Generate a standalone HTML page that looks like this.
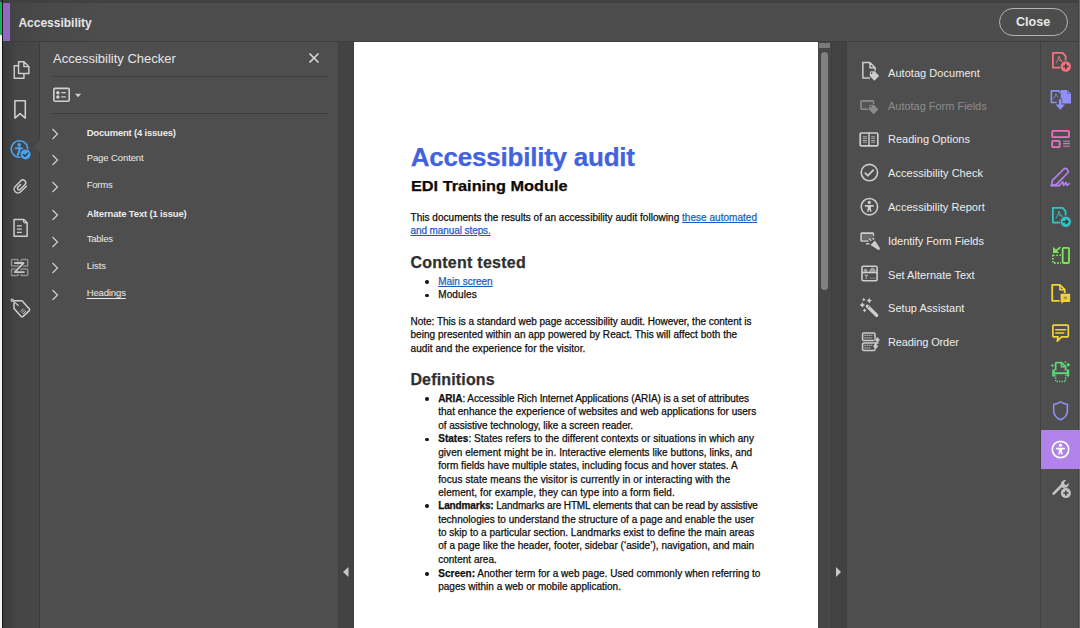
<!DOCTYPE html>
<html><head><meta charset="utf-8">
<style>
*{margin:0;padding:0;box-sizing:border-box}
html,body{width:1080px;height:628px;overflow:hidden;background:#4d4d4d;font-family:"Liberation Sans",sans-serif}
.a{position:absolute}
.t{position:absolute;white-space:nowrap;line-height:1}
/* header */
#topstrip{left:0;top:0;width:1080px;height:3px;background:#414141}
#hdr{left:3px;top:3px;width:1076px;height:38px;background:linear-gradient(90deg,#434343 0px,#494949 40px,#4d4d4d 110px)}
#hdrline{left:3px;top:41px;width:1076px;height:1px;background:#3e3e3e}
#edgeG{left:0;top:2px;width:2px;height:33px;background:#1faa6a}
#edgeW{left:0;top:35px;width:2px;height:593px;background:#f4f4f4}
#edgeB{left:2px;top:0;width:1px;height:628px;background:#151515}
#purple{left:3px;top:3px;width:7px;height:38px;background:#9169c2}
#rightedge{left:1078px;top:0;width:2px;height:628px;background:linear-gradient(90deg,#404040 50%,#6a6a6a 50%)}
/* left icon bar */
#lbar{left:3px;top:42px;width:36px;height:586px;background:linear-gradient(90deg,#3b3b3b 0%,#454545 40%,#474747 100%)}
#lbarline{left:39px;top:42px;width:1px;height:586px;background:#3c3c3c}
/* panel */
#panel{left:40px;top:42px;width:298px;height:586px;background:#4e4e4e}
#gutL{left:338px;top:42px;width:16px;height:586px;background:#434343;border-left:1px solid #3f3f3f;border-right:1px solid #3f3f3f}
#gutLline{left:338px;top:42px;width:1px;height:586px;background:#464646}
/* page */
#page{left:354px;top:42px;width:464px;height:586px;background:#fff}
#sbar{left:818px;top:42px;width:13px;height:586px;background:#464646}
#sbtop{left:819px;top:43px;width:11px;height:5px;background:#7a7a7a}
#thumb{left:821px;top:52px;width:7px;height:238px;background:#808080;border-radius:4px}
#gutR{left:831px;top:42px;width:16px;height:586px;background:#424242;border-left:1px solid #3e3e3e;border-right:1px solid #3f3f3f}
/* right panel */
#rpanel{left:847px;top:42px;width:193px;height:586px;background:#4e4e4e}
#rline{left:1040px;top:42px;width:1px;height:586px;background:#404040}
#rbar{left:1041px;top:42px;width:37px;height:586px;background:#4e4e4e}
.d{position:absolute;white-space:nowrap;line-height:1;font-size:10px;color:#0e0e0e;transform-origin:0 0;-webkit-text-stroke-width:0.25px}
.p{position:absolute;white-space:nowrap;line-height:1;color:#ebebeb;transform-origin:0 0}
.t{transform-origin:0 0}

.lk{color:#1d5ec4;text-decoration:underline;text-underline-offset:1px}
.bul{width:3.8px;height:3.8px;border-radius:50%;background:#111}
</style></head><body>
<div class="a" id="topstrip"></div>
<div class="a" id="hdr"></div>
<div class="a" id="hdrline"></div>
<div class="a" id="edgeG"></div>
<div class="a" id="edgeW"></div>
<div class="a" id="edgeB"></div>
<div class="a" id="purple"></div>
<div class="t" style="left:18.4px;top:16.5px;font-size:12px;font-weight:bold;color:#e6e6e6">Accessibility</div>
<div class="a" style="left:999px;top:8px;width:69px;height:28px;border:1.8px solid #b3b3b3;border-radius:14px"></div>
<div class="t" style="left:1016px;top:16.2px;font-size:12.6px;font-weight:bold;color:#e6e6e6">Close</div>

<div class="a" id="lbar"></div>
<div class="a" id="lbarline"></div>
<div class="a" id="panel"></div>
<div class="a" id="gutL"></div>
<div class="a" id="page"></div>
<div class="a" id="sbar"></div>
<div class="a" id="sbtop"></div>
<div class="a" id="thumb"></div>
<div class="a" id="gutR"></div>
<div class="a" id="rpanel"></div>
<div class="a" id="rline"></div>
<div class="a" id="rbar"></div>
<div class="a" id="rightedge"></div>

<div class="t" style="left:53px;top:52.3px;font-size:13px;color:#e6e6e6">Accessibility Checker</div>
<svg class="a" style="left:307px;top:51.1px" width="14" height="14" viewBox="0 0 14 14"><path d="M2.5 2.5L11.5 11.5M11.5 2.5L2.5 11.5" stroke="#d6d6d6" stroke-width="1.7"/></svg>
<div class="a" style="left:53px;top:76px;width:275px;height:1px;background:#3c3c3c"></div>
<svg class="a" style="left:52px;top:86px" width="32" height="17" viewBox="0 0 32 17"><rect x="1.85" y="2.4" width="15.35" height="12.8" rx="1.2" fill="none" stroke="#d0d0d0" stroke-width="1.6"/><circle cx="5.85" cy="6.65" r="1.75" fill="#cfcfcf"/><circle cx="5.85" cy="10.95" r="1.75" fill="#cfcfcf"/><path d="M9.2 6.65H13.8M9.2 10.95H13.8" stroke="#cfcfcf" stroke-width="1.3"/><path d="M23 7.8H29.2L26.1 11.2Z" fill="#cfcfcf"/></svg>
<div class="a" style="left:53px;top:113px;width:275px;height:1px;background:#3c3c3c"></div>
<svg class="a" style="left:341px;top:565px" width="10" height="14" viewBox="0 0 10 14"><path d="M7.5 2V12L2 7Z" fill="#c8c8c8"/></svg>
<svg class="a" style="left:833px;top:565px" width="10" height="14" viewBox="0 0 10 14"><path d="M3 2V12L8 7Z" fill="#c8c8c8"/></svg>

<div class="p" style="left:86.7px;top:128.06px;font-size:9.5px;letter-spacing:-0.201px;font-weight:bold">Document (4 issues)</div>
<div class="p" style="left:86.7px;top:153.16px;font-size:9.5px;letter-spacing:-0.101px">Page Content</div>
<div class="p" style="left:86.7px;top:179.76px;font-size:9.5px;letter-spacing:-0.230px">Forms</div>
<div class="p" style="left:86.7px;top:209.16px;font-size:9.5px;letter-spacing:-0.166px;font-weight:bold">Alternate Text (1 issue)</div>
<div class="p" style="left:86.7px;top:233.96px;font-size:9.5px;letter-spacing:-0.234px">Tables</div>
<div class="p" style="left:86.7px;top:260.86px;font-size:9.5px;letter-spacing:-0.062px">Lists</div>
<div class="p" style="left:86.7px;top:288.06px;font-size:9.5px;letter-spacing:-0.134px;text-decoration:underline;text-underline-offset:1.5px">Headings</div>
<svg class="a" style="left:51px;top:127.7px" width="8" height="12" viewBox="0 0 8 12"><path d="M1.5 1 L6.5 6 L1.5 11" fill="none" stroke="#cfcfcf" stroke-width="1.2"/></svg>
<svg class="a" style="left:51px;top:154.0px" width="8" height="12" viewBox="0 0 8 12"><path d="M1.5 1 L6.5 6 L1.5 11" fill="none" stroke="#cfcfcf" stroke-width="1.2"/></svg>
<svg class="a" style="left:51px;top:181.0px" width="8" height="12" viewBox="0 0 8 12"><path d="M1.5 1 L6.5 6 L1.5 11" fill="none" stroke="#cfcfcf" stroke-width="1.2"/></svg>
<svg class="a" style="left:51px;top:208.8px" width="8" height="12" viewBox="0 0 8 12"><path d="M1.5 1 L6.5 6 L1.5 11" fill="none" stroke="#cfcfcf" stroke-width="1.2"/></svg>
<svg class="a" style="left:51px;top:235.5px" width="8" height="12" viewBox="0 0 8 12"><path d="M1.5 1 L6.5 6 L1.5 11" fill="none" stroke="#cfcfcf" stroke-width="1.2"/></svg>
<svg class="a" style="left:51px;top:262.0px" width="8" height="12" viewBox="0 0 8 12"><path d="M1.5 1 L6.5 6 L1.5 11" fill="none" stroke="#cfcfcf" stroke-width="1.2"/></svg>
<svg class="a" style="left:51px;top:289.0px" width="8" height="12" viewBox="0 0 8 12"><path d="M1.5 1 L6.5 6 L1.5 11" fill="none" stroke="#cfcfcf" stroke-width="1.2"/></svg>
<div class="d" style="left:410.5px;top:212.84px;letter-spacing:0.031px">This documents the results of an accessibility audit following <span class="lk">these automated</span></div>
<div class="d" style="left:410.5px;top:226.44px;letter-spacing:-0.089px"><span class="lk">and manual steps.</span></div>
<div class="d" style="left:438.2px;top:277.04px;letter-spacing:0.003px"><span class="lk">Main screen</span></div>
<div class="d" style="left:438.2px;top:290.14px;letter-spacing:0.131px">Modules</div>
<div class="d" style="left:410.5px;top:317.24px;letter-spacing:-0.009px">Note: This is a standard web page accessibility audit. However, the content is</div>
<div class="d" style="left:410.5px;top:330.44px;letter-spacing:0.041px">being presented within an app powered by React. This will affect both the</div>
<div class="d" style="left:410.5px;top:343.54px;letter-spacing:0.078px">audit and the experience for the visitor.</div>
<div class="d" style="left:438.2px;top:393.94px;letter-spacing:-0.061px"><b>ARIA</b>: Accessible Rich Internet Applications (ARIA) is a set of attributes</div>
<div class="d" style="left:438.2px;top:407.44px;letter-spacing:0.016px">that enhance the experience of websites and web applications for users</div>
<div class="d" style="left:438.2px;top:420.64px;letter-spacing:-0.015px">of assistive technology, like a screen reader.</div>
<div class="d" style="left:438.2px;top:434.44px;letter-spacing:0.033px"><b>States</b>: States refers to the different contexts or situations in which any</div>
<div class="d" style="left:438.2px;top:447.74px;letter-spacing:0.053px">given element might be in. Interactive elements like buttons, links, and</div>
<div class="d" style="left:438.2px;top:461.24px;letter-spacing:0.030px">form fields have multiple states, including focus and hover states. A</div>
<div class="d" style="left:438.2px;top:474.54px;letter-spacing:0.085px">focus state means the visitor is currently in or interacting with the</div>
<div class="d" style="left:438.2px;top:487.74px;letter-spacing:0.080px">element, for example, they can type into a form field.</div>
<div class="d" style="left:438.2px;top:501.04px;letter-spacing:-0.134px"><b>Landmarks:</b> Landmarks are HTML elements that can be read by assistive</div>
<div class="d" style="left:438.2px;top:514.63px;letter-spacing:0.027px">technologies to understand the structure of a page and enable the user</div>
<div class="d" style="left:438.2px;top:527.93px;letter-spacing:0.012px">to skip to a particular section. Landmarks exist to define the main areas</div>
<div class="d" style="left:438.2px;top:541.13px;letter-spacing:0.026px">of a page like the header, footer, sidebar (&#8216;aside&#8217;), navigation, and main</div>
<div class="d" style="left:438.2px;top:554.53px;letter-spacing:0.019px">content area.</div>
<div class="d" style="left:438.2px;top:568.63px;letter-spacing:0.022px"><b>Screen:</b> Another term for a web page. Used commonly when referring to</div>
<div class="d" style="left:438.2px;top:581.93px;letter-spacing:0.011px">pages within a web or mobile application.</div>
<div class="d" style="left:410.8px;top:143.89px;font-size:26px;font-weight:bold;color:#4262de;letter-spacing:-0.228px">Accessibility audit</div>
<div class="d" style="left:410.5px;top:179.31px;font-size:14.4px;font-weight:bold;color:#0b0b0b;transform:scaleX(1.1314)">EDI Training Module</div>
<div class="d" style="left:410.4px;top:255.26px;font-size:16px;font-weight:bold;color:#2f2f2f;letter-spacing:0.262px">Content tested</div>
<div class="d" style="left:410.4px;top:372.36px;font-size:16px;font-weight:bold;color:#2f2f2f;letter-spacing:0.163px">Definitions</div>
<div class="a bul" style="left:424.9px;top:279.9px"></div>
<div class="a bul" style="left:424.9px;top:293.5px"></div>
<div class="a bul" style="left:424.9px;top:397.0px"></div>
<div class="a bul" style="left:424.9px;top:437.5px"></div>
<div class="a bul" style="left:424.9px;top:504.3px"></div>
<div class="a bul" style="left:424.9px;top:571.9px"></div>
<div class="t" style="left:888px;top:67.79px;font-size:11px;color:#ededed;letter-spacing:0.045px">Autotag Document</div>
<div class="t" style="left:888px;top:101.09px;font-size:11px;color:#8c8c8c;letter-spacing:-0.019px">Autotag Form Fields</div>
<div class="t" style="left:888px;top:134.49px;font-size:11px;color:#ededed;letter-spacing:0.003px">Reading Options</div>
<div class="t" style="left:888px;top:168.29px;font-size:11px;color:#ededed;letter-spacing:0.048px">Accessibility Check</div>
<div class="t" style="left:888px;top:202.19px;font-size:11px;color:#ededed;letter-spacing:0.038px">Accessibility Report</div>
<div class="t" style="left:888px;top:235.59px;font-size:11px;color:#ededed;letter-spacing:-0.037px">Identify Form Fields</div>
<div class="t" style="left:888px;top:269.59px;font-size:11px;color:#ededed;letter-spacing:0.039px">Set Alternate Text</div>
<div class="t" style="left:888px;top:302.99px;font-size:11px;color:#ededed;letter-spacing:0.041px">Setup Assistant</div>
<div class="t" style="left:888px;top:336.69px;font-size:11px;color:#ededed;letter-spacing:-0.113px">Reading Order</div>
<svg class="a" style="left:856px;top:56px" width="30" height="30" viewBox="856 56 30 30"><path d="M870 62.6 H862.85 V78 H870 M870 62.6 L875.1 67.7 V72 M870 62.6 V67.7 H875.1" fill="none" stroke="#cdcdcd" stroke-width="1.5" stroke-linejoin="round"/><g transform="translate(870.0 71.5) rotate(45)"><path d="M0 0 L3 -3.4 H8.799999999999999 Q9.6 -3.4 9.6 -2.5999999999999996 V2.5999999999999996 Q9.6 3.4 8.799999999999999 3.4 H3 Z" fill="#cdcdcd" stroke="#4e4e4e" stroke-width="1.4" stroke-linejoin="round" paint-order="stroke"/><circle cx="2.25" cy="0" r="0.85" fill="#4e4e4e"/></g></svg>
<svg class="a" style="left:856px;top:91px" width="30" height="30" viewBox="856 91 30 30"><path d="M869 109.3 H861.8 Q861 109.3 861 108.5 V101.7 Q861 100.9 861.8 100.9 H872.8 Q873.6 100.9 873.6 101.7 V104" fill="#555555" stroke="#8a8a8a" stroke-width="1.6"/><g transform="translate(869.3 105.1) rotate(45)"><path d="M0 0 L3 -3.4 H8.799999999999999 Q9.6 -3.4 9.6 -2.5999999999999996 V2.5999999999999996 Q9.6 3.4 8.799999999999999 3.4 H3 Z" fill="#8a8a8a" stroke="#4e4e4e" stroke-width="1.4" stroke-linejoin="round" paint-order="stroke"/><circle cx="2.25" cy="0" r="0.85" fill="#4e4e4e"/></g></svg>
<svg class="a" style="left:854px;top:124px" width="30" height="30" viewBox="854 124 30 30"><rect x="860.2" y="133" width="17.6" height="12.8" rx="1" fill="none" stroke="#cdcdcd" stroke-width="1.7"/><path d="M869 133 V145.8" stroke="#cdcdcd" stroke-width="1.5"/><path d="M862.8 136.7H866.9M862.8 138.4H866.9M862.8 140.5H866.9M862.8 142.2H866.9M871.2 136.7H875M871.2 138.4H875M871.2 140.5H875M871.2 142.2H875" stroke="#b5b5b5" stroke-width="0.9"/></svg>
<svg class="a" style="left:854px;top:158px" width="30" height="30" viewBox="854 158 30 30"><circle cx="869.4" cy="172.6" r="8.2" fill="none" stroke="#cdcdcd" stroke-width="1.6"/><path d="M865.3 173.2 L867.9 175.7 L873.3 170.2" fill="none" stroke="#cdcdcd" stroke-width="1.8" stroke-linecap="round" stroke-linejoin="round"/></svg>
<svg class="a" style="left:854px;top:192px" width="30" height="30" viewBox="854 192 30 30"><circle cx="869.4" cy="206.7" r="8.2" fill="none" stroke="#cdcdcd" stroke-width="1.6"/><circle cx="869.3" cy="202.4" r="1.65" fill="#cdcdcd"/><path d="M865.5 205.8 H873.0999999999999" stroke="#cdcdcd" stroke-width="1.7" stroke-linecap="round"/><path d="M867.6999999999999 205.60000000000002 H870.9 V208.8 L871.5999999999999 211.8 H870.1999999999999 L869.3 209.4 L868.4 211.8 H867.0 L867.6999999999999 208.8 Z" fill="#cdcdcd"/></svg>
<svg class="a" style="left:854px;top:226px" width="30" height="30" viewBox="854 226 30 30"><path d="M873.4 236 V233.9 Q873.4 233.1 872.6 233.1 H861.9 Q861.1 233.1 861.1 233.9 V240.2 Q861.1 241 861.9 241 H868.5" fill="none" stroke="#cdcdcd" stroke-width="1.6"/><rect x="862" y="234" width="10.6" height="6.2" fill="#6a6a6a"/><path d="M873.4 237.6 V239.8" stroke="#cdcdcd" stroke-width="1.6"/><path d="M866 243.8 H869.5" stroke="#cdcdcd" stroke-width="1.4"/><path d="M868.8 238.3 L871.3 240.8" stroke="#cdcdcd" stroke-width="1.2"/><path d="M870.5 244.9 L874.9 240.5 L879.5 247.5 A1.4 1.4 0 0 1 877.5 249.5 Z" fill="#cdcdcd" stroke="#4e4e4e" stroke-width="0.8" stroke-linejoin="round" paint-order="stroke"/></svg>
<svg class="a" style="left:854px;top:259px" width="30" height="30" viewBox="854 259 30 30"><rect x="862" y="266.3" width="15.1" height="14.4" rx="1.2" fill="none" stroke="#cdcdcd" stroke-width="1.6"/><path d="M862 272.6 H877" stroke="#cdcdcd" stroke-width="1.4"/><path d="M863 272 Q865.6 265.2 868.2 272 Z M868.6 272 Q872.5 262.8 876.4 272 Z" fill="#a0a0a0"/><path d="M864.6 275.4 H868 M866.3 275.4 V279" stroke="#a8a8a8" stroke-width="1.1"/><path d="M869.8 278.2 H875.5" stroke="#9a9a9a" stroke-width="1" stroke-dasharray="1 0.6"/></svg>
<svg class="a" style="left:854px;top:293px" width="30" height="30" viewBox="854 293 30 30"><path d="M867.4 306.2 L876.6 315.2" stroke="#cdcdcd" stroke-width="3.4" stroke-linecap="round"/><circle cx="868.5" cy="306.9" r="0.6" fill="#555"/><path d="M863.8 297.70000000000005 Q864.332 299.06800000000004 865.6999999999999 299.6 Q864.332 300.132 863.8 301.5 Q863.2679999999999 300.132 861.9 299.6 Q863.2679999999999 299.06800000000004 863.8 297.70000000000005 Z" fill="#cdcdcd"/><path d="M869.3 297.90000000000003 Q870.0559999999999 299.84400000000005 872.0 300.6 Q870.0559999999999 301.356 869.3 303.3 Q868.544 301.356 866.5999999999999 300.6 Q868.544 299.84400000000005 869.3 297.90000000000003 Z" fill="#cdcdcd"/><path d="M862.4 302.3 Q863.156 304.244 865.1 305 Q863.156 305.756 862.4 307.7 Q861.644 305.756 859.6999999999999 305 Q861.644 304.244 862.4 302.3 Z" fill="#cdcdcd"/><path d="M864.6 308.59999999999997 Q865.104 309.89599999999996 866.4 310.4 Q865.104 310.904 864.6 312.2 Q864.096 310.904 862.8000000000001 310.4 Q864.096 309.89599999999996 864.6 308.59999999999997 Z" fill="#cdcdcd"/></svg>
<svg class="a" style="left:854px;top:327px" width="30" height="30" viewBox="854 327 30 30"><rect x="862.6" y="333" width="12.4" height="7.4" rx="1" fill="none" stroke="#cdcdcd" stroke-width="1.5"/><rect x="862.6" y="343" width="12.4" height="7.4" rx="1" fill="none" stroke="#cdcdcd" stroke-width="1.5"/><path d="M864.3 335.3H873.3M864.3 337.9H872.6 M864.3 345.3H872M864.3 347.9H871" stroke="#b0b0b0" stroke-width="1.2" stroke-dasharray="1.5 0.6"/><path d="M877.3 337 L880.3 340.5 H878.5 V344 H876.1 V340.5 H874.3 Z" fill="#cdcdcd" stroke="#4e4e4e" stroke-width="0.8" paint-order="stroke"/><path d="M874.4 342 V345.6 H872.6 L875.6 349.4 L878.6 345.6 H876.8 V342 Z" fill="#cdcdcd" stroke="#4e4e4e" stroke-width="0.8" paint-order="stroke"/></svg>
<svg class="a" style="left:1046px;top:46px" width="30" height="30" viewBox="1046 46 30 30"><path d="M1064 67.6 H1052.9 V52.9 H1062.6 L1065.6 56.1 V60.4" fill="none" stroke="#f07480" stroke-width="1.8" stroke-linejoin="round"/><path d="M1058.9 56.5 Q1059.6 59 1061.6 60.8 M1058.9 56.5 Q1058.6 59.5 1056.2 63 M1058.9 59.8 Q1060.5 61.2 1062.5 61.4" fill="none" stroke="#f07480" stroke-width="0.9" stroke-linecap="round"/><circle cx="1065.8" cy="66.5" r="5.2" fill="#f07480" stroke="#4e4e4e" stroke-width="1.3" paint-order="stroke"/><path d="M1065.8 63.8 V69.2 M1063.1 66.5 H1068.5" stroke="#3d3d3d" stroke-width="1.5"/></svg>
<svg class="a" style="left:1046px;top:84px" width="30" height="30" viewBox="1046 84 30 30"><path d="M1056.8 102.5 H1051.4 V90.9 H1058.6 L1060.4 92.7" fill="none" stroke="#8f8ff7" stroke-width="1.7" stroke-linejoin="round"/><path d="M1060.6 90 H1067.4 L1071 93.6 V103.4 H1060.6 Z" fill="#8f8ff7"/><path d="M1067.6 90.6 V93.4 H1070.4" fill="none" stroke="#5a5a8a" stroke-width="0.8"/><path d="M1056 93.6 Q1057 96 1058 97.4 M1056 93.6 Q1055.6 96.5 1053.6 98.8" fill="none" stroke="#8f8ff7" stroke-width="0.8"/><path d="M1058.9 99.2 V104.6 H1055.6 L1060.25 110 L1064.9 104.6 H1061.6 V99.2 Z" fill="#8f8ff7" stroke="#4e4e4e" stroke-width="1.2" paint-order="stroke"/></svg>
<svg class="a" style="left:1046px;top:124px" width="30" height="30" viewBox="1046 124 30 30"><rect x="1052.2" y="130.9" width="16.8" height="6.3" rx="1" fill="none" stroke="#ef6fbf" stroke-width="1.8"/><rect x="1052.2" y="140.9" width="7.5" height="6.3" rx="1" fill="none" stroke="#ef6fbf" stroke-width="1.8"/><path d="M1063.2 141.2 H1069.9 M1063.2 143.6 H1069.9 M1063.2 146.2 H1069.9" stroke="#ef6fbf" stroke-width="1.1"/></svg>
<svg class="a" style="left:1046px;top:163px" width="30" height="30" viewBox="1046 163 30 30"><path d="M1051.3 185.6 L1052.6 180.2 L1063.8 169 Q1065.3 167.8 1066.8 169.2 L1067.6 170 Q1068.8 171.5 1067.6 173 L1056.6 184.4 Z" fill="none" stroke="#b681f2" stroke-width="1.7" stroke-linejoin="round"/><path d="M1051.3 185.6 H1059.5 L1062.8 181.8 L1063.6 185.4 L1066.1 182.3 L1066.9 185.4 L1069.4 183.7" fill="none" stroke="#b681f2" stroke-width="1.6" stroke-linejoin="round" stroke-linecap="round"/></svg>
<svg class="a" style="left:1046px;top:202px" width="30" height="30" viewBox="1046 202 30 30"><path d="M1064 222.6 H1052.9 V207.9 H1062.6 L1065.6 211.1 V215.4" fill="none" stroke="#2ec4ca" stroke-width="1.8" stroke-linejoin="round"/><path d="M1058.9 211.5 Q1059.6 214 1061.6 215.8 M1058.9 211.5 Q1058.6 214.5 1056.2 218 M1058.9 214.8 Q1060.5 216.2 1062.5 216.4" fill="none" stroke="#2ec4ca" stroke-width="0.9" stroke-linecap="round"/><circle cx="1065.8" cy="221.8" r="5.2" fill="#2ec4ca" stroke="#4e4e4e" stroke-width="1.3" paint-order="stroke"/><path d="M1062.6 221.8 H1067.6 M1065.6 219.6 L1068 221.8 L1065.6 224" fill="none" stroke="#3d3d3d" stroke-width="1.5"/></svg>
<svg class="a" style="left:1046px;top:240px" width="30" height="30" viewBox="1046 240 30 30"><rect x="1062.7" y="247.8" width="6.3" height="15.2" rx="1" fill="none" stroke="#80e35c" stroke-width="1.8"/><path d="M1052.9 254.8 V263 H1061" fill="none" stroke="#80e35c" stroke-width="1.8" stroke-dasharray="1.6 1.5"/><path d="M1061 255.3 H1053.6" fill="none" stroke="#80e35c" stroke-width="1.6" stroke-dasharray="1.6 1.5"/><path d="M1059.8 247.6 L1055 251.6" stroke="#80e35c" stroke-width="1.8" stroke-linecap="round"/><path d="M1053 246.8 L1053 253 L1059.2 253 Z" fill="#80e35c"/></svg>
<svg class="a" style="left:1046px;top:279px" width="30" height="30" viewBox="1046 279 30 30"><path d="M1059.6 300.8 H1052.2 V284.9 H1059.9 L1064.7 289.7 V293" fill="none" stroke="#f4d33a" stroke-width="1.8" stroke-linejoin="round"/><path d="M1059.9 284.9 V289.7 H1064.7" fill="none" stroke="#f4d33a" stroke-width="1.6" stroke-linejoin="round"/><path d="M1060.6 293.8 H1070.1 V301.9 H1063.6 L1061.6 304.1 V301.9 H1060.6 Z" fill="#f4d33a" stroke="#4e4e4e" stroke-width="1" paint-order="stroke"/><rect x="1063.6" y="296.6" width="3.6" height="2.6" fill="#b09a30"/></svg>
<svg class="a" style="left:1046px;top:318px" width="30" height="30" viewBox="1046 318 30 30"><path d="M1053.6 325.1 H1067.4 Q1068.3 325.1 1068.3 326 V336 Q1068.3 336.9 1067.4 336.9 H1061.6 L1057.3 341.2 L1058 336.9 H1053.6 Q1052.9 336.9 1052.9 336 V326 Q1052.9 325.1 1053.6 325.1 Z" fill="none" stroke="#f4d33a" stroke-width="1.7" stroke-linejoin="round"/><path d="M1055.8 329.7 H1065.6 M1055.8 333 H1063.8" stroke="#f4d33a" stroke-width="1.6" stroke-linecap="round"/></svg>
<svg class="a" style="left:1046px;top:357px" width="30" height="30" viewBox="1046 357 30 30"><path d="M1055.6 370.5 V363.6 Q1055.6 362.6 1056.6 362.6 H1061.6 L1065.6 366.6 V370.5" fill="none" stroke="#5cd67a" stroke-width="1.8" stroke-linejoin="round"/><path d="M1061.4 362.8 V366.8 H1065.4" fill="none" stroke="#5cd67a" stroke-width="1.5"/><rect x="1052.2" y="369.2" width="2.6" height="7.6" rx="1.2" fill="#5cd67a"/><rect x="1066.6" y="369.2" width="2.6" height="7.6" rx="1.2" fill="#5cd67a"/><rect x="1053" y="372.2" width="15.4" height="2" fill="#5cd67a"/><path d="M1055.6 375.2 V381.4 H1065.6 V375.2" fill="none" stroke="#5cd67a" stroke-width="1.5" stroke-dasharray="1.3 1.1"/><path d="M1052.4 363.79999999999995 Q1052.88 364.91999999999996 1054.0 365.4 Q1052.88 365.88 1052.4 367.0 Q1051.92 365.88 1050.8000000000002 365.4 Q1051.92 364.91999999999996 1052.4 363.79999999999995 Z" fill="#5cd67a"/><path d="M1068.2 362.6 Q1068.8600000000001 364.14 1070.4 364.8 Q1068.8600000000001 365.46000000000004 1068.2 367.0 Q1067.54 365.46000000000004 1066.0 364.8 Q1067.54 364.14 1068.2 362.6 Z" fill="#5cd67a"/><path d="M1065.4 360.8 Q1065.76 361.64 1066.6000000000001 362 Q1065.76 362.36 1065.4 363.2 Q1065.0400000000002 362.36 1064.2 362 Q1065.0400000000002 361.64 1065.4 360.8 Z" fill="#5cd67a"/></svg>
<svg class="a" style="left:1046px;top:395px" width="30" height="30" viewBox="1046 395 30 30"><path d="M1060.6 401.8 Q1057.6 403.8 1053.7 404.2 V410.8 Q1053.7 416.8 1060.6 419.8 Q1067.4 416.8 1067.4 410.8 V404.2 Q1063.6 403.8 1060.6 401.8 Z" fill="none" stroke="#8f8ff7" stroke-width="1.6" stroke-linejoin="round"/></svg>
<div class="a" style="left:1041px;top:430px;width:39px;height:39px;background:#b183ea"></div>
<svg class="a" style="left:1046px;top:435px" width="30" height="30" viewBox="1046 435 30 30"><circle cx="1060.5" cy="449.5" r="8.2" fill="none" stroke="#fff" stroke-width="1.7"/><circle cx="1060.5" cy="445.20000000000005" r="1.65" fill="#fff"/><path d="M1056.7 448.6 H1064.3" stroke="#fff" stroke-width="1.7" stroke-linecap="round"/><path d="M1058.9 448.40000000000003 H1062.1 V451.6 L1062.8 454.6 H1061.4 L1060.5 452.20000000000005 L1059.6 454.6 H1058.2 L1058.9 451.6 Z" fill="#fff"/></svg>
<svg class="a" style="left:1046px;top:473px" width="30" height="30" viewBox="1046 473 30 30"><path d="M1053.6 493.6 L1062.2 485" stroke="#c4c4c4" stroke-width="2.6" stroke-linecap="round"/><path d="M1061 486.2 Q1060 481.6 1063.8 480.2 Q1065.2 479.8 1066.2 480.2 L1064 482.4 L1064.6 484.4 L1066.6 485 L1068.8 482.8 Q1069.4 485.8 1067 487.6 Q1065 488.8 1062.6 487.8 Z" fill="#c4c4c4"/><circle cx="1065.9" cy="493.1" r="5" fill="#c4c4c4" stroke="#4e4e4e" stroke-width="1.3" paint-order="stroke"/><path d="M1065.9 490.5 V495.7 M1063.3 493.1 H1068.5" stroke="#444" stroke-width="1.5"/></svg>
<svg class="a" style="left:8px;top:56px" width="26" height="26" viewBox="8 56 26 26"><path d="M18.55 61.65 H23.9 L28.85 66.6 V73.55 H18.55 Z M23.9 61.65 V66.6 H28.85" fill="none" stroke="#cecece" stroke-width="1.45" stroke-linejoin="round"/><path d="M18.55 65.75 H14.25 V78.15 H23.95 V73.55" fill="none" stroke="#cecece" stroke-width="1.45" stroke-linejoin="round"/></svg>
<svg class="a" style="left:8px;top:96px" width="26" height="26" viewBox="8 96 26 26"><path d="M14.9 100.8 H25.3 V118.1 L20.1 113.6 L14.9 118.1 Z" fill="none" stroke="#cecece" stroke-width="1.55" stroke-linejoin="round"/></svg>
<svg class="a" style="left:6px;top:136px" width="30" height="30" viewBox="6 136 30 30"><circle cx="19.5" cy="149" r="8.3" fill="none" stroke="#4aa3f2" stroke-width="1.6"/><circle cx="19.2" cy="144.9" r="1.8" fill="#4aa3f2"/><path d="M15.8 148.4 Q19 147.4 22.3 148.4" stroke="#4aa3f2" stroke-width="2" fill="none" stroke-linecap="round"/><path d="M19.8 148.3 Q19.1 152.5 17.8 154.8" stroke="#4aa3f2" stroke-width="2.2" fill="none" stroke-linecap="round"/><circle cx="25.6" cy="154.4" r="5" fill="#4aa3f2" stroke="#444444" stroke-width="1.4" paint-order="stroke"/><path d="M23.3 154.5 L25 156.2 L28 152.9" fill="none" stroke="#2a3a4a" stroke-width="1.4" stroke-linecap="round" stroke-linejoin="round"/></svg>
<svg class="a" style="left:6px;top:172px" width="28" height="28" viewBox="6 172 28 28"><g transform="translate(20.5 186.6) rotate(-45)"><path d="M4.5 3.85 H-3.55 A3.85 3.85 0 0 1 -3.55 -3.85 H4.4 A2.8 2.8 0 0 1 4.4 1.75 H-2.2 A1.6 1.6 0 0 1 -2.2 -1.45 H1.6" fill="none" stroke="#cecece" stroke-width="1.45" stroke-linecap="round"/></g></svg>
<svg class="a" style="left:6px;top:213px" width="28" height="28" viewBox="6 213 28 28"><path d="M14.05 219.45 H23.8 L27.15 222.8 V236.25 H14.05 Z" fill="none" stroke="#cecece" stroke-width="1.45" stroke-linejoin="round"/><path d="M23.6 219.6 V221.6 Q23.6 222.8 24.8 222.8 H27" fill="none" stroke="#cecece" stroke-width="1.2"/><path d="M16.9 225.9 H21.8 M16.9 229.1 H21.8 M16.9 232.4 H21.8" stroke="#cecece" stroke-width="1.4"/></svg>
<svg class="a" style="left:6px;top:253px" width="28" height="28" viewBox="6 253 28 28"><rect x="11.5" y="259.4" width="6.6" height="6.6" rx="0.8" fill="none" stroke="#8f8f8f" stroke-width="1.5"/><rect x="21.1" y="259.4" width="6.6" height="6.6" rx="0.8" fill="none" stroke="#8f8f8f" stroke-width="1.5"/><rect x="11.5" y="269" width="6.6" height="6.6" rx="0.8" fill="none" stroke="#8f8f8f" stroke-width="1.5"/><rect x="21.1" y="269" width="6.6" height="6.6" rx="0.8" fill="none" stroke="#8f8f8f" stroke-width="1.5"/><path d="M14.2 263 H23.6 L14.7 272.2 H24.6" fill="none" stroke="#444444" stroke-width="3.2"/><path d="M14.2 263 H23.6 L14.7 272.2 H24.6" fill="none" stroke="#c4c4c4" stroke-width="1.8" stroke-linejoin="round"/></svg>
<svg class="a" style="left:6px;top:293px" width="28" height="28" viewBox="6 293 28 28"><path d="M13.6 300.8 H22 L29.4 308.9 Q30 309.8 29.3 310.6 L22.8 316.6 Q22 317.2 21.2 316.5 L14 308.6 V302.8" fill="none" stroke="#cecece" stroke-width="1.5" stroke-linejoin="round"/><circle cx="12.2" cy="300.3" r="1.2" fill="none" stroke="#cecece" stroke-width="1.1"/><path d="M13.2 301.2 L18.4 305.5" stroke="#cecece" stroke-width="1.1" stroke-linecap="round"/><path d="M20.6 311.6 L23.6 308.6 M21.8 312.8 L24.8 309.8 M23 314 L26 311" stroke="#cecece" stroke-width="0.9"/></svg>
<svg class="a" style="left:32px;top:138px" width="10" height="17" viewBox="32 138 10 17"><path d="M40 138 V139.4 L33.1 146.6 L40 153 V155 H42 V138 Z" fill="#4e4e4e"/><path d="M39.5 138 V139.4 L33.1 146.4 L39.5 153.2 V155" fill="none" stroke="#3d3d3d" stroke-width="0.9"/></svg>
</body></html>
